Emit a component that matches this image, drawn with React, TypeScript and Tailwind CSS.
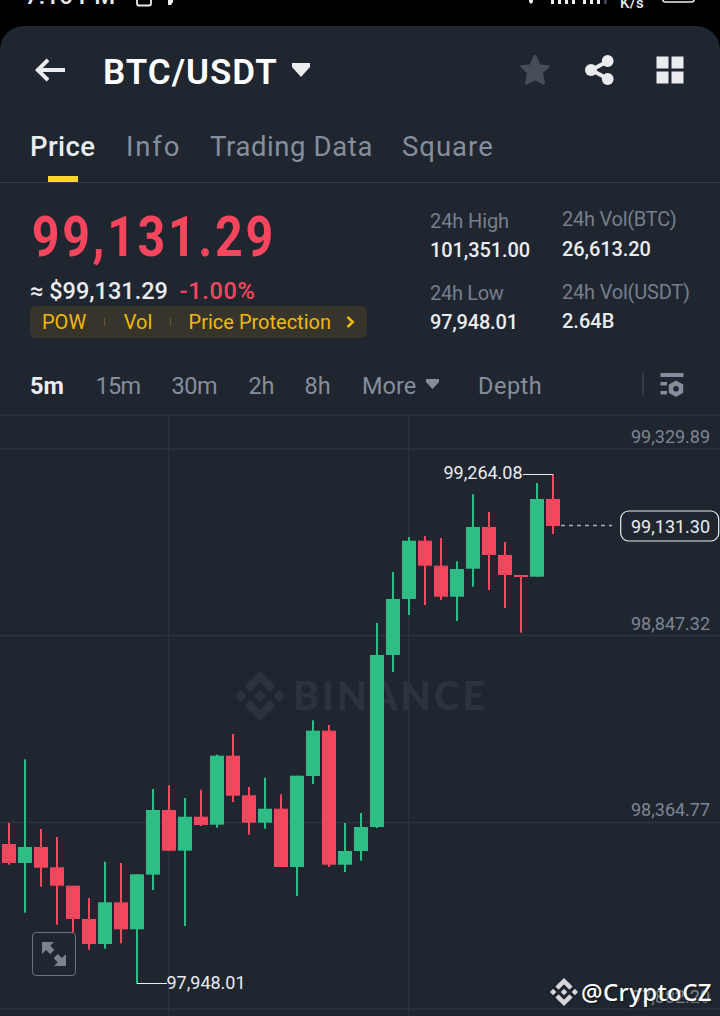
import React from 'react';

type Candle = [up: boolean, high: number, top: number, bottom: number, low: number];

// One entry per 5 minute candle, values are y positions on the chart
const candles: Candle[] = [
  [false, 823, 844, 863, 864.7],
  [true, 759.3, 847, 863, 912.7],
  [false, 829, 847, 867.7, 886.7],
  [false, 837, 867.3, 885.7, 924.7],
  [false, 885.7, 885.7, 919, 940],
  [false, 898, 919, 944, 949.7],
  [true, 861.7, 902.3, 944, 948.7],
  [false, 863, 902.3, 929.3, 943.3],
  [true, 874.3, 874.3, 929.3, 983.7],
  [true, 789, 810, 874.7, 890],
  [false, 785.3, 810, 850.7, 850.7],
  [true, 798, 816.7, 850.7, 926],
  [false, 789.7, 816.7, 825, 826],
  [true, 754.7, 755.7, 824.7, 827.7],
  [false, 734, 755.7, 795.7, 802],
  [false, 787, 795.3, 822.7, 834.7],
  [true, 777.7, 808.7, 822.7, 828.7],
  [false, 794.3, 808.7, 867, 867],
  [true, 775.7, 775.7, 867, 896],
  [true, 720.3, 730.7, 776, 784],
  [false, 725, 730.7, 864.7, 867],
  [true, 823, 851, 864.7, 872],
  [true, 813, 827, 851, 860.7],
  [true, 623, 655, 827, 828],
  [true, 572, 599, 655, 672],
  [true, 537, 540.7, 599, 615],
  [false, 536, 540.7, 565.7, 605],
  [false, 538, 565.7, 596.7, 600],
  [true, 561.3, 569, 596.7, 621],
  [true, 494.3, 527, 568.7, 586.7],
  [false, 512, 527, 555, 590],
  [false, 542, 555, 575, 608],
  [false, 575, 575, 577, 632.7],
  [true, 483, 499, 576.7, 576.7],
  [false, 474.3, 499, 526, 534],
];

const axisLabels = [
  { y: 443, text: '99,329.89' },
  { y: 630, text: '98,847.32' },
  { y: 816, text: '98,364.77' },
  { y: 1003, text: '97,882.20' },
];

const tabs = [
  { label: 'Price', className: 'w-24 font-medium text-[#eaecef] tracking-[0.4px]' },
  { label: 'Info', className: 'w-[84px] text-[#848e9c] tracking-[1.8px]' },
  { label: 'Trading Data', className: 'w-48 text-[#848e9c] tracking-[0.6px]' },
  { label: 'Square', className: 'text-[#848e9c] tracking-[1px]' },
];

const intervals = [
  { label: '5m', className: 'w-[65.500px] font-bold text-[#eaecef]' },
  { label: '15m', className: 'w-[76px] tracking-[-0.7px]' },
  { label: '30m', className: 'w-[77px] tracking-[-0.4px]' },
  { label: '2h', className: 'w-14 tracking-[-0.2px]' },
  { label: '8h', className: 'w-[57.500px]' },
];

const BinanceMark: React.FC<{ className: string }> = ({ className }) => (
  <svg viewBox="0 0 50 50" fill="currentColor" className={className}>
    <path d="M15.3 21 25 11.3l9.7 9.7 5.7-5.7L25 0 9.6 15.3zM0 25l5.6-5.6 5.7 5.6-5.7 5.6zM15.3 29 25 38.7l9.7-9.7 5.7 5.7L25 50 9.6 34.7zM38.7 25l5.7-5.6L50 25l-5.6 5.6zM19.3 25l5.7-5.7 5.7 5.7-5.7 5.7z" />
  </svg>
);

const StatusBar: React.FC = () => (
  <div className="relative h-[26px] shrink-0 overflow-hidden text-[#eaecef]">
    <span className="absolute -top-[16px] left-[25px] text-[24px] leading-6 font-medium tracking-[0.1px]">7:16 PM</span>
    <svg viewBox="0 0 720 26" className="absolute inset-0 h-full w-full" fill="currentColor">
      <path d="M137 0v3.5q0 2 2 2h10q2 0 2-2V0" fill="none" stroke="currentColor" strokeWidth="1.8" />
      <path d="M168 0h5v2l-2 3h-3zM529 0h4v2l-2 2-2-2z" />
      <path d="M551 0h3v4h-3zM558 0h3v4h-3zM565 0h3v4h-3zM572 0h3v4h-3zM583 0h3v4h-3zM590 0h3v4h-3zM597 0h3v4h-3z" />
      <path d="M604 0h3v4h-3z" fill="#3c424d" />
      <path d="M663 0q0 2 2.500 2h26q2.500 0 2.500-2" fill="none" stroke="currentColor" strokeWidth="1.6" />
    </svg>
    <span className="absolute -top-[5px] left-[620px] text-[15px] leading-4 font-medium tracking-[0.3px]">K/s</span>
  </div>
);

const Header: React.FC = () => (
  <header className="flex h-[88px] items-center pr-9 pl-[34px]">
    <svg viewBox="0 0 32 24" className="h-6 w-8" fill="none" stroke="#eaecef" strokeWidth="4">
      <path d="M31 12H4M14 1.800 3.800 12 14 22.200" />
    </svg>
    <h1 className="ml-[37px] w-[189px] pt-[6px] text-[35px] font-semibold tracking-[1px] text-white">BTC/USDT</h1>
    <svg viewBox="0 0 18 14" className="h-3.5 w-[18px]" fill="#eaecef">
      <path d="M0 0h18v4l-9 10L0 4z" />
    </svg>
    <div className="ml-auto flex items-center">
      <svg viewBox="0 0 30 30" className="h-[30px] w-[30px]" fill="#474d57">
        <path d="M15 0q1.200 0 1.700 1.200l3.600 8.300 8.800.8q1.400.4.400 1.700l-6.500 6.200 2 9.800q0 2-1.800 1.500L15 25.400l-8.200 4.100q-1.800.500-1.800-1.500l2-9.800L.5 12q-1-1.300.4-1.700l8.800-.8 3.600-8.300Q13.800 0 15 0z" />
      </svg>
      <svg viewBox="0 0 30 30" className="ml-[35px] h-[30px] w-[30px]" fill="#eaecef">
        <path d="M6.500 15 23 6M6.500 15 23 24" stroke="#eaecef" strokeWidth="3.800" />
        <circle cx="6" cy="15" r="6" />
        <circle cx="22.700" cy="6" r="5.900" />
        <circle cx="22.700" cy="24" r="5.900" />
      </svg>
      <svg viewBox="0 0 28 28" className="ml-[41px] h-7 w-7" fill="#eaecef">
        <path d="M.5.500h12v12H.5zM15.500.500h12v12h-12zM.5 15.500h12v12H.5zM15.500 15.500h12v12h-12z" />
      </svg>
    </div>
  </header>
);

const Stats: React.FC = () => (
  <div className="flex text-[20px] leading-7 whitespace-nowrap">
    <div className="w-[132px] pt-0.5">
      <p className="tracking-[-0.1px] text-[#767e8c]">24h High</p>
      <p className="pt-px font-medium tracking-[-0.1px] text-[#eaecef]">101,351.00</p>
      <p className="mt-[15px] tracking-[-0.3px] text-[#767e8c]">24h Low</p>
      <p className="pt-px font-medium tracking-[-0.2px] text-[#eaecef]">97,948.01</p>
    </div>
    <div>
      <p className="tracking-[-0.25px] text-[#767e8c]">24h Vol(BTC)</p>
      <p className="pt-[1.500px] font-medium tracking-[-0.1px] text-[#eaecef]">26,613.20</p>
      <p className="mt-[15.500px] tracking-[-0.2px] text-[#767e8c]">24h Vol(USDT)</p>
      <p className="pt-px font-medium text-[#eaecef]">2.64B</p>
    </div>
  </div>
);

const PriceInfo: React.FC = () => (
  <section className="flex h-[174px] pt-[22px] pl-[30px]">
    <div className="w-[400px] pt-0.5">
      <p className="h-[68px] origin-left scale-x-[0.88] pl-[2px] text-[55px] leading-[60px] font-bold tracking-[3px] text-[#f6465d]">
        99,131.29
      </p>
      <div className="flex h-[31px] items-center pt-0.5 text-[23.500px] font-medium whitespace-nowrap">
        <span className="w-[149.500px] text-[#eaecef]">≈ $99,131.29</span>
        <span className="tracking-[0.7px] text-[#f6465d]">-1.00%</span>
      </div>
      <div className="flex h-8 w-[337px] items-center rounded-md bg-[#36342b] px-3 text-[20px] text-[#f0b90b]">
        <span className="w-[62px]">POW</span>
        <span className="h-2 w-px bg-[#6b5620]" />
        <span className="ml-[19px] w-[46px]">Vol</span>
        <span className="h-2 w-px bg-[#6b5620]" />
        <span className="ml-[18px] w-[158px] whitespace-nowrap">Price Protection</span>
        <svg viewBox="0 0 9 12" className="h-3 w-[9px] shrink-0" fill="none" stroke="currentColor" strokeWidth="2.500">
          <path d="M1.500 1 6.800 6l-5.300 5" />
        </svg>
      </div>
    </div>
    <Stats />
  </section>
);

const IntervalBar: React.FC = () => (
  <nav className="flex h-[59px] items-center border-b-2 border-[#2b313a] pt-0.5 pl-[30px] text-[23.500px] text-[#848e9c]">
    {intervals.map((item) => (
      <span key={item.label} className={item.className}>{item.label}</span>
    ))}
    <span className="w-16">More</span>
    <svg viewBox="0 0 13 10" className="-mt-1.5 h-2.5 w-[13px]" fill="currentColor">
      <path d="M0 0h13v3L6.500 10 0 3z" />
    </svg>
    <span className="ml-[39px] w-[164px] tracking-[0.5px]">Depth</span>
    <span className="-mt-1.5 h-6 w-0.5 bg-[#333b47]" />
    <svg viewBox="0 0 24 24" className="-mt-1 ml-4 h-6 w-6" fill="currentColor">
      <path d="M.5 0h23v4H.5zM.5 9h6.500v3.500H.5zM.5 18h6.500v3.500H.5z" />
      <path fillRule="evenodd" d="M16 7.500l7.200 4v8.300l-7.200 4.200-7.200-4.200v-8.300zM16 13a2.800 2.800 0 1 0 0 5.600 2.800 2.800 0 0 0 0-5.600z" />
    </svg>
  </nav>
);

const Chart: React.FC = () => (
  <section className="relative h-[600px]">
    <svg viewBox="0 416 720 600" className="block h-[600px] w-[720px]">
      <g stroke="#2d333d" strokeWidth="1.500">
        <path d="M0 449H720M0 635.500H720M0 822.500H720M0 1009H720M168.500 416V1016M408.500 416V1016" />
      </g>
      <g fill="#2d333d">
        <path transform="translate(235 671)" d="M15.300 21 25 11.300l9.700 9.700 5.700-5.700L25 0 9.600 15.300zM0 25l5.600-5.600 5.700 5.600-5.700 5.600zM15.300 29 25 38.700l9.700-9.700 5.700 5.700L25 50 9.600 34.700zM38.700 25l5.700-5.600L50 25l-5.600 5.600zM19.300 25l5.700-5.700 5.700 5.700-5.700 5.700z" />
        <text x="293" y="710" fontSize="39" fontWeight="900" textLength="192" className="font-['Lato',sans-serif]">BINANCE</text>
      </g>
      {candles.map(([up, high, top, bottom, low], i) => (
        <g key={i} fill={up ? '#2ebd85' : '#f6465d'}>
          <rect x={8 + i * 16} y={high} width="2" height={low - high} />
          <rect x={2 + i * 16} y={top} width="14" height={bottom - top} />
        </g>
      ))}
      <g fill="#7d8593" fontSize="18">
        {axisLabels.map((label) => (
          <text key={label.text} x="631" y={label.y}>{label.text}</text>
        ))}
      </g>
      {/* Current price */}
      <path d="M561 525.500H612" stroke="#a9afb9" strokeWidth="1.400" strokeDasharray="4 4" />
      <rect x="620.700" y="511" width="98" height="30" rx="8" fill="#202630" stroke="#eaecef" strokeWidth="1.200" />
      {/* High / low markers */}
      <path d="M523 474.500H553M137 983.500H167" stroke="#eaecef" />
      <g fill="#eaecef" fontSize="18">
        <text x="631" y="533">99,131.30</text>
        <text x="443.500" y="479">99,264.08</text>
        <text x="166.500" y="989">97,948.01</text>
      </g>
    </svg>
    <button className="absolute top-[516px] left-8 flex h-11 w-11 items-center justify-center rounded border border-[#6b7380] bg-[#202630]">
      <svg viewBox="0 0 24 24" className="h-6 w-6" fill="#7a8290">
        <path d="M0 0h12L8.300 3.700l4 4-4 4.500-4.300-4.300L0 12zM24 24H12l3.700-3.700-4-4 4-4.300 4.300 4L24 12z" />
      </svg>
    </button>
    <div className="absolute top-[560px] left-[550px] flex h-8 items-center text-white">
      <BinanceMark className="h-7 w-7 text-[#d5d7da]" />
      <span className="ml-[3px] font-['Noto_Sans',sans-serif] text-[24px] leading-8 font-medium tracking-[0.4px] [text-shadow:1px_1px_2px_rgba(0,0,0,0.6)]">@CryptoCZ</span>
    </div>
  </section>
);

const App: React.FC = () => (
  <div className="flex h-[1016px] w-[720px] flex-col overflow-hidden bg-black font-['Roboto',sans-serif]">
    <StatusBar />
    <main className="flex-1 rounded-t-[24px] bg-[#202630]">
      <Header />
      <nav className="flex h-[69px] border-b border-[#353c47] pl-[30px] text-[27.500px] leading-[65px] whitespace-nowrap">
        {tabs.map((tab, i) => (
          <span key={tab.label} className={`relative ${tab.className}`}>
            {tab.label}
            {i === 0 && <span className="absolute bottom-0 left-[18px] h-1.5 w-[30px] bg-[#fcd535]" />}
          </span>
        ))}
      </nav>
      <PriceInfo />
      <IntervalBar />
      <Chart />
    </main>
  </div>
);

export default App;
